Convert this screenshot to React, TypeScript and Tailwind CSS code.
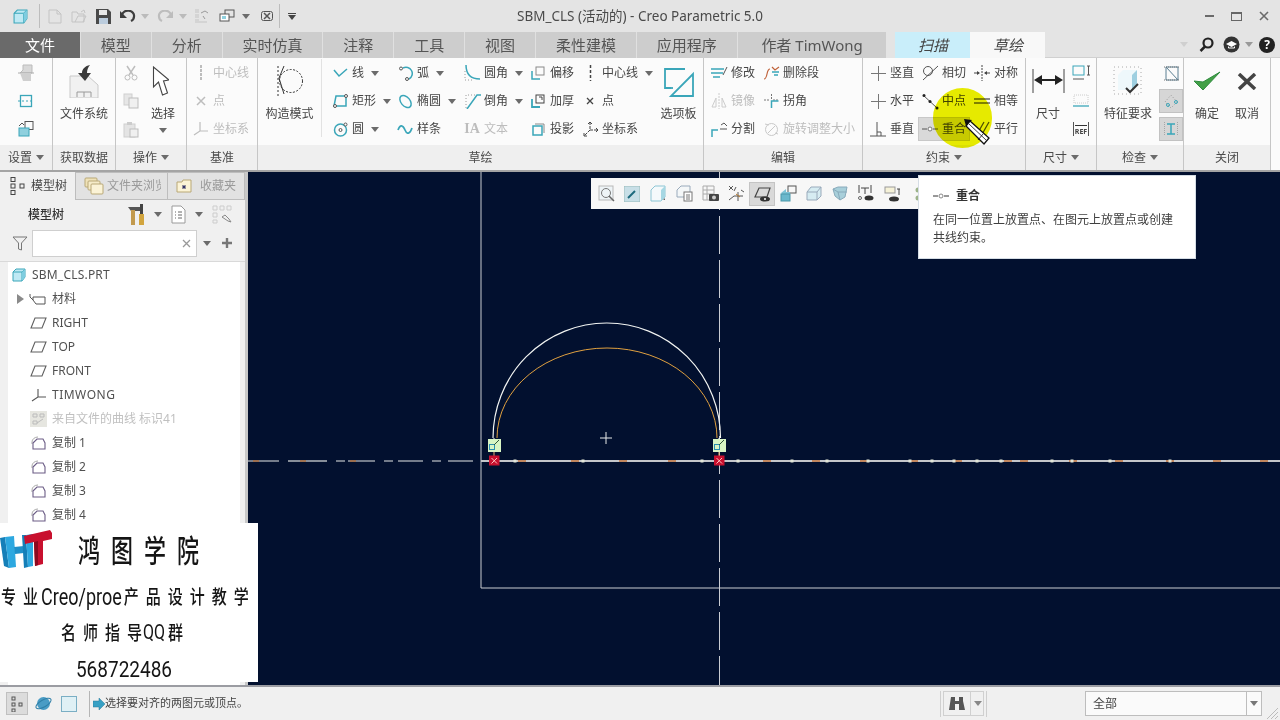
import React from 'react';

type K = { children?: React.ReactNode; w?: number; h?: number };
const S = ({ children, w = 16, h = 16 }: K) => (
  <svg width={w} height={h} viewBox={`0 0 ${w} ${h}`} fill="none" className="shrink-0 block">{children}</svg>
);
const T = '#3aa6b9';
const D = '#c4c4c4';

const Caret = ({ c = '#6b6b6b' }: { c?: string }) => (
  <svg width="8" height="5" viewBox="0 0 8 5" className="shrink-0 block"><path d="M0 0h8L4 5z" fill={c} /></svg>
);

const Cube = ({ s = 14 }: { s?: number }) => (
  <svg width={s} height={s} viewBox="0 0 14 14" className="shrink-0 block">
    <path d="M1 4l3-3h9v8l-3 4H1z" fill="#bfe9f4" stroke="#3aa6b9" />
    <path d="M1 4h9v9M10 4l3-3" stroke="#3aa6b9" fill="none" />
    <path d="M10 4l3-3v8l-3 4z" fill="#7fcde0" />
  </svg>
);

const Item = ({ icon, label, arrow, dis }: { icon: React.ReactNode; label: string; arrow?: boolean; dis?: boolean }) => (
  <div className={`flex items-center h-[28px] text-[12px] whitespace-nowrap ${dis ? 'text-[#bdbdbd]' : 'text-[#454545]'}`}>
    <span className="w-[18px] flex justify-center shrink-0">{icon}</span>
    <span className="ml-[3px]">{label}</span>
    {arrow && <span className="ml-[7px]"><Caret /></span>}
  </div>
);

const Cell = ({ children, on }: { children: React.ReactNode; on?: boolean }) => (
  <div className="h-[28px] flex items-center justify-center">
    <div className={`w-[24px] h-[24px] flex items-center justify-center ${on ? 'bg-[#d6d6d6] border border-[#c2c2c2]' : ''}`}>{children}</div>
  </div>
);

const Group = ({ label, arrow, className, children }: { label: string; arrow?: boolean; className: string; children: React.ReactNode }) => (
  <div className={`flex flex-col h-full border-r border-[#c6c6c6] shrink-0 ${className}`}>
    <div className="h-[87px] pt-[1px] flex">{children}</div>
    <div className="h-[25px] bg-[#efefef] flex items-center justify-center gap-[4px] text-[12px] text-[#4a4a4a]">
      {label}{arrow && <Caret />}
    </div>
  </div>
);

const Big = ({ icon, label, className, arrow }: { icon: React.ReactNode; label: string; className: string; arrow?: boolean }) => (
  <div className={`flex flex-col items-center text-[12px] text-[#454545] whitespace-nowrap ${className}`}>
    <div className="h-[44px] flex items-center justify-center">{icon}</div>
    <div className="h-[22px] flex items-center">{label}</div>
    {arrow && <div className="mt-[3px]"><Caret /></div>}
  </div>
);

const tabs: [string, string][] = [
  ['模型', 'w-[71px]'], ['分析', 'w-[71px]'], ['实时仿真', 'w-[101px]'], ['注释', 'w-[71px]'], ['工具', 'w-[71px]'],
  ['视图', 'w-[71px]'], ['柔性建模', 'w-[101px]'], ['应用程序', 'w-[101px]'], ['作者 TimWong', 'w-[150px]'],
];

const Plane = () => (
  <S w={17} h={14}><path d="M5 2h11l-4 10H1z" stroke="#5f5f5f" strokeWidth="1.1" /></S>
);
const Copy = () => (
  <S w={17} h={16}>
    <path d="M8 2a6 5 0 0 0-6 5v2" stroke="#a9a9a9" />
    <path d="M3 8l4-4h6l2 4v6H3z" stroke="#6c5d86" strokeWidth="1.1" />
  </S>
);

const Tree = ({ icon, label, dis, wide }: { icon: React.ReactNode; label: string; dis?: boolean; wide?: boolean }) => (
  <div className={`h-[24px] flex items-center pl-[21px] text-[12px] ${dis ? 'text-[#c0c0c0]' : 'text-[#505050]'}`}>
    <span className="w-[19px] flex justify-center shrink-0">{icon}</span>
    <span className={`ml-[4px] whitespace-nowrap ${wide ? 'tracking-[0.5px]' : ''}`}>{label}</span>
  </div>
);

const TbIcon = ({ children, on }: { children: React.ReactNode; on?: boolean }) => (
  <div className={`w-[26px] h-[24px] flex items-center justify-center shrink-0 ${on ? 'bg-[#d9d9d9] border border-[#c4c4c4]' : ''}`}>{children}</div>
);

const dotsX = [515, 583, 702, 738, 792, 827, 868, 910, 932, 954, 977, 1001, 1052, 1072, 1110, 1170];
const orangeX = [518, 571, 619, 668, 763, 812, 860, 910, 954, 1004, 1020, 1069, 1115, 1166, 1213, 1260];
const dashes = [[248, 279], [288, 327], [336, 345], [348, 375], [384, 393], [398, 423], [432, 441], [448, 473]];

const Marker = ({ x }: { x: number }) => (
  <g>
    <path d={`M${x} 438v8`} stroke="#fff" />
    <rect x={x - 6} y={439} width={13} height={13} fill="#d8f5c4" />
    <rect x={x - 4.5} y={444.5} width={5} height={5} fill="none" stroke="#2c8fb0" />
    <path d={`M${x} 445l5-5`} stroke="#30553a" />
    <path d={`M${x} 452v5`} stroke="#e8b070" />
    <rect x={x - 5} y={455.5} width={10.5} height={10} fill="#c8102e" />
    <path d={`M${x - 2.5} 458l5.500 5.500M${x + 3} 458l-5.500 5.500`} stroke="#ffc0c0" />
  </g>
);

export default function App() {
  return (
    <div className="relative w-[1280px] h-[720px] overflow-hidden flex flex-col bg-[#f0f0f0] font-['Noto_Sans','Noto_Sans_CJK_SC',sans-serif] text-[#454545]">
      {/* Title bar */}
      <div className="h-[32px] shrink-0 bg-[#e4e4e4] grid grid-cols-[1fr_auto_1fr] items-center">
        <div className="flex items-center">
          <span className="ml-[13px]"><Cube s={15} /></span>
          <span className="ml-[11px] w-px h-[24px] bg-[#bdbdbd]" />
          <span className="ml-[8px]"><S w={14} h={15}><path d="M1 1h8l4 4v9H1z" stroke={D} /><path d="M9 1v4h4" stroke={D} /></S></span>
          <span className="ml-[9px]"><S w={16} h={14}><path d="M1 3h5l1 2h6v8H1z" stroke={D} /><path d="M4 13l3-6h8l-3 6" stroke={D} /><path d="M10 3l3-2 1 3" stroke={D} /></S></span>
          <span className="ml-[9px]"><S w={15} h={15}><path d="M0 0h12l3 3v12H0z" fill="#4a4a4a" /><rect x="3" y="1" width="8" height="5" fill="#e8e8e8" /><rect x="3" y="9" width="9" height="6" fill="#bcd" /></S></span>
          <span className="ml-[9px]"><S w={16} h={12}><path d="M2 5a6 5 0 0 1 12 1.500c0 2-1 3.500-3 4.500" stroke="#3d3d3d" strokeWidth="2.200" /><path d="M0 1v7h7z" fill="#3d3d3d" /></S></span>
          <span className="ml-[5px]"><Caret c="#bbb" /></span>
          <span className="ml-[8px]"><S w={16} h={12}><path d="M14 5a6 5 0 0 0-12 1.500c0 2 1 3.500 3 4.500" stroke="#bdbdbd" strokeWidth="2.200" /><path d="M16 1v7H9z" fill="#bdbdbd" /></S></span>
          <span className="ml-[6px]"><Caret c="#bbb" /></span>
          <span className="ml-[7px]"><S w={15} h={16}><path d="M1 2h4M1 7h4M1 12h4M1 4h4M1 9h4M1 14h12" stroke={D} /><path d="M7 5l4-2 3 2M9 8l2 3" stroke="#9a9a9a" /></S></span>
          <span className="ml-[10px]"><S w={16} h={14}><rect x="6" y="1" width="9" height="7" stroke="#555" /><rect x="1" y="5" width="9" height="7" fill="#fff" stroke="#555" /><rect x="3" y="7" width="4" height="3" fill="#8fd0de" /></S></span>
          <span className="ml-[7px]"><Caret /></span>
          <span className="ml-[11px]"><S w={12} h={10}><rect x="0.500" y="0.500" width="11" height="9" rx="2" stroke="#555" /><path d="M3 2l6 6M9 2L3 8" stroke="#555" strokeWidth="1.500" /></S></span>
          <span className="ml-[6px] w-px h-[24px] bg-[#bdbdbd]" />
          <span className="ml-[8px] flex flex-col gap-[1px] items-center"><span className="w-[8px] h-px bg-[#444]" /><Caret c="#444" /></span>
        </div>
        <div className="text-[13.5px] text-[#4a4a4a] whitespace-nowrap">SBM_CLS (活动的) - Creo Parametric 5.0</div>
        <div className="flex items-center justify-end pr-[11px] gap-[17px]">
          <span className="w-[9px] h-[2px] bg-[#6a6a6a]" />
          <span className="w-[11px] h-[9px] border border-[#666] border-t-2" />
          <S w={10} h={10}><path d="M1 1l8 8M9 1L1 9" stroke="#6a6a6a" strokeWidth="1.600" /></S>
        </div>
      </div>

      {/* Tabs */}
      <div className="h-[26px] shrink-0 bg-[#cdcdcd] flex text-[15px] text-[#555]">
        <div className="w-[80px] bg-[#6a6a6a] text-white flex items-center justify-center">文件</div>
        {tabs.map(([t, w]) => (
          <div key={t} className={`${w} flex items-center justify-center border-l border-[#e0e0e0] whitespace-nowrap`}>{t}</div>
        ))}
        <div className="w-[9px] bg-[#e4e4e4]" />
        <div className="flex h-full">
          <div className="w-[75px] bg-[#c9eefa] italic flex items-center justify-center text-[#444]">扫描</div>
          <div className="w-[75px] bg-[#f8f8f8] italic flex items-center justify-center text-[#444]">草绘</div>
        </div>
        <div className="w-[235px] bg-[#e4e4e4] flex items-center justify-end pr-[5px] border-b border-[#d0d0d0]">
          <Caret c="#cfcfcf" />
          <span className="ml-[11px]"><S w={15} h={15}><circle cx="9" cy="6" r="4.500" stroke="#222" strokeWidth="2.200" /><path d="M6 9.500L1.500 14" stroke="#222" strokeWidth="2.500" /></S></span>
          <span className="ml-[9px]"><S w={17} h={17}><circle cx="8.500" cy="8.500" r="8" fill="#333" /><path d="M3 8l5.500-3L14 8l-5.500 3z" fill="#fff" /><path d="M5.500 10.500v1.500h6v-1.500" stroke="#fff" /></S></span>
          <span className="ml-[5px]"><Caret c="#999" /></span>
          <span className="ml-[6px] w-[16px] h-[16px] rounded-full bg-[#222] text-white text-[12px] font-bold flex items-center justify-center">?</span>
        </div>
      </div>

      {/* Ribbon */}
      <div className="h-[114px] shrink-0 flex bg-[#fbfbfb] border-b-2 border-[#a4a4a4]">
        <Group label="设置" arrow className="w-[53px]">
          <div className="w-full flex flex-col items-center">
            <div className="h-[28px] flex items-center"><S w={18} h={18}><path d="M6 1h9v8H3l3-3z" fill="#d8d8d8" stroke="#bbb" /><path d="M1 9h16" stroke="#aaa" /><path d="M3 9l3 8h8V9" fill="#cfcfcf" /></S></div>
            <div className="h-[28px] flex items-center"><S w={16} h={14}><rect x="2.500" y="1.500" width="11" height="11" stroke={T} strokeWidth="1.300" /><path d="M0 7h16" stroke={T} strokeDasharray="2 2" /></S></div>
            <div className="h-[28px] flex items-center"><S w={18} h={18}><rect x="8" y="1.500" width="8" height="8" stroke="#555" /><rect x="2" y="8" width="10" height="8" fill="#8fd0de" stroke={T} /><path d="M2 6l3-3 2 2" stroke="#555" /></S></div>
          </div>
        </Group>
        <Group label="获取数据" className="w-[63px]">
          <Big className="w-full" label="文件系统" icon={
            <S w={30} h={33}>
              <path d="M1 11h18l10 9v13H1z" fill="#f1f1f1" stroke="#c9c9c9" />
              <path d="M8 32v-5h7v5M15 27h7v5" stroke="#9a9a9a" />
              <path d="M21 0c-5 1-8 4-8 8H9l7 8 6-8h-4c0-3 1-6 3-8z" fill="#3a3a3a" />
            </S>} />
        </Group>
        <Group label="操作" arrow className="w-[71px]">
          <div className="w-[28px] flex flex-col items-center ml-[1px]">
            <div className="h-[28px] flex items-center"><S w={14} h={16}><path d="M3 1l6 9M11 1L5 10" stroke="#bdbdbd" strokeWidth="1.500" /><circle cx="3.500" cy="12.500" r="2.500" stroke="#bdbdbd" /><circle cx="10.500" cy="12.500" r="2.500" stroke="#bdbdbd" /></S></div>
            <div className="h-[28px] flex items-center"><S w={16} h={16}><rect x="1" y="1" width="8" height="11" fill="#e6e6e6" stroke="#cfcfcf" /><rect x="6" y="5" width="9" height="10" fill="#f0f0f0" stroke="#bdbdbd" /></S></div>
            <div className="h-[28px] flex items-center"><S w={16} h={17}><rect x="1" y="3" width="11" height="13" fill="#e4e4e4" stroke="#cfcfcf" /><rect x="4" y="1" width="5" height="3" fill="#ccc" /><rect x="7" y="8" width="8" height="8" fill="#f0f0f0" stroke="#bdbdbd" /></S></div>
          </div>
          <Big className="w-[36px]" label="选择" arrow icon={
            <span className="mr-[6px]"><S w={17} h={31}><path d="M1.500 1v20l5-5 4 13 5-2-4-12 5.500-1z" fill="#fff" stroke="#444" strokeWidth="1.100" /></S></span>} />
        </Group>
        <Group label="基准" className="w-[71px]">
          <div className="pl-[5px]">
            <Item dis label="中心线" icon={<S w={4} h={16}><path d="M2 0v16" stroke="#bdbdbd" strokeWidth="2" strokeDasharray="3 1" /></S>} />
            <Item dis label="点" icon={<S w={10} h={10}><path d="M1 1l8 8M9 1L1 9" stroke="#bdbdbd" strokeWidth="1.500" /></S>} />
            <Item dis label="坐标系" icon={<S w={16} h={16}><path d="M7 1v9l-6 4M7 10h8" stroke="#bdbdbd" strokeWidth="1.200" /></S>} />
          </div>
        </Group>
        <Group label="草绘" className="w-[446px]">
          <Big className="w-[64px] border-r border-[#e2e2e2] h-[78px]" label="构造模式" icon={
            <S w={28} h={30}>
              <path d="M2 0v30" stroke="#333" strokeDasharray="2 2" />
              <path d="M8 0L3 12l5 16" stroke="#333" />
              <circle cx="15" cy="15" r="11.500" stroke="#333" strokeDasharray="2 1.500" />
            </S>} />
          <div className="w-[65px] ml-[9px]">
            <Item arrow label="线" icon={<S w={15} h={10}><path d="M1 2l5 6 8-7" stroke={T} strokeWidth="1.500" /></S>} />
            <Item arrow label="矩形" icon={<S w={15} h={14}><path d="M3 2h10v10H1z" stroke={T} strokeWidth="1.500" /><circle cx="13" cy="2" r="1.500" fill="#fff" stroke="#555" /><circle cx="2" cy="12" r="1.500" fill="#fff" stroke="#555" /></S>} />
            <Item arrow label="圆" icon={<S w={15} h={15}><circle cx="7.500" cy="8" r="6" stroke={T} strokeWidth="1.500" /><circle cx="7.500" cy="8" r="1.500" stroke="#555" /><circle cx="12.500" cy="2.500" r="1.500" fill="#fff" stroke="#555" /></S>} />
          </div>
          <div className="w-[67px]">
            <Item arrow label="弧" icon={<S w={15} h={15}><path d="M5 2a6 6 0 0 1 6 11" stroke={T} strokeWidth="1.500" /><circle cx="3" cy="2.500" r="1.500" stroke="#555" /><circle cx="9" cy="13" r="1.500" stroke="#555" /></S>} />
            <Item arrow label="椭圆" icon={<S w={15} h={15}><ellipse cx="7.500" cy="7.500" rx="4.500" ry="7" transform="rotate(-40 7.500 7.500)" stroke={T} strokeWidth="1.500" /></S>} />
            <Item label="样条" icon={<S w={16} h={10}><path d="M1 6c2-6 5-5 7 0s5 4 7-2" stroke={T} strokeWidth="1.700" /></S>} />
          </div>
          <div className="w-[66px]">
            <Item arrow label="圆角" icon={<S w={17} h={16}><path d="M2 0c0 9 5 14 14 14" stroke={T} strokeWidth="1.500" /><path d="M1 6v9h9" stroke="#9a9a9a" strokeDasharray="1 2" /></S>} />
            <Item arrow label="倒角" icon={<S w={17} h={16}><path d="M3 16L13 2h4" stroke={T} strokeWidth="1.500" /><path d="M2 15V2h10" stroke="#9a9a9a" strokeDasharray="1 2" /></S>} />
            <Item dis label="文本" icon={<span className="font-['Liberation_Serif',serif] font-bold text-[14px] text-[#bdbdbd] leading-none">IA</span>} />
          </div>
          <div className="w-[52px]">
            <Item label="偏移" icon={<S w={14} h={14}><path d="M1 5v8h8" stroke={T} strokeWidth="1.500" /><rect x="5" y="1" width="8" height="8" stroke="#8a8a8a" /></S>} />
            <Item label="加厚" icon={<S w={14} h={14}><path d="M1 5v8h8" stroke={T} strokeWidth="1.800" /><rect x="5" y="1" width="8" height="8" stroke="#444" /><path d="M8 3h3v3" stroke="#444" /></S>} />
            <Item label="投影" icon={<S w={13} h={13}><rect x="1" y="3" width="9" height="9" stroke={T} strokeWidth="1.500" /><path d="M3 1h9v9" stroke="#8a8a8a" /></S>} />
          </div>
          <div className="w-[74px]">
            <Item arrow label="中心线" icon={<S w={3} h={16}><path d="M1.500 0v16" stroke="#444" strokeWidth="1.500" strokeDasharray="3 2" /></S>} />
            <Item label="点" icon={<S w={8} h={8}><path d="M1 1l6 6M7 1L1 7" stroke="#444" strokeWidth="1.300" /></S>} />
            <Item label="坐标系" icon={<S w={15} h={16}><path d="M7 1v8l-6 6M7 9h7" stroke="#444" strokeDasharray="3 1" /><path d="M5 3l2-2 2 2M13 7l2 2-2 2M1 12v3h3" stroke="#444" /></S>} />
          </div>
          <Big className="w-[47px]" label="选项板" icon={
            <S w={31} h={31}>
              <path d="M22 3H2v19h6" stroke={T} strokeWidth="1.800" />
              <path d="M8 30h22V8z" stroke={T} strokeWidth="1.800" />
              <path d="M2 22h8" stroke={T} strokeWidth="1.800" />
            </S>} />
        </Group>
        <Group label="编辑" className="w-[159px]">
          <div className="w-[58px] pl-[6px]">
            <Item label="修改" icon={<S w={17} h={14}><path d="M0 3h13M0 7h12M2 11h7" stroke={T} strokeWidth="1.300" /><path d="M16 1l-4 8" stroke="#555" /></S>} />
            <Item dis label="镜像" icon={<S w={16} h={16}><path d="M8 0v16" stroke="#ccc" strokeDasharray="2 1" /><path d="M1 14l4-9v9zM15 14l-4-9v9z" stroke="#ccc" /></S>} />
            <Item label="分割" icon={<S w={17} h={15}><path d="M1 15V8h6" stroke={T} strokeWidth="1.500" /><path d="M9 7h7M10 3l3-2 3 3" stroke="#555" /></S>} />
          </div>
          <div>
            <Item label="删除段" icon={<S w={17} h={16}><path d="M1 14c4 0 2-10 6-10M16 2l-4 3-3-3" stroke="#c0623a" strokeWidth="1.200" /><path d="M9 7h7M11 10h4" stroke={T} strokeWidth="1.300" /></S>} />
            <Item label="拐角" icon={<S w={15} h={14}><path d="M0 6h6M9 6h6" stroke="#777" strokeDasharray="2 1" /><path d="M7.500 0v5" stroke="#777" strokeDasharray="2 1" /><path d="M7.500 14V7h7" stroke={T} strokeWidth="1.500" /></S>} />
            <Item dis label="旋转调整大小" icon={<S w={15} h={15}><circle cx="7.500" cy="7.500" r="6" stroke="#c9c9c9" /><path d="M4 11l7-7M1 2l4 1M11 11l3 1" stroke="#c9c9c9" /></S>} />
          </div>
        </Group>
        <Group label="约束" arrow className="w-[163px]">
          <div className="w-[58px] pl-[6px]">
            <Item label="竖直" icon={<S w={15} h={15}><path d="M7.500 0v15M0 7.500h15" stroke="#777" /></S>} />
            <Item label="水平" icon={<S w={15} h={15}><path d="M7.500 0v15M0 7.500h15" stroke="#777" /></S>} />
            <Item label="垂直" icon={<S w={16} h={15}><path d="M0 14h16M7 0v14M7 10h4v4" stroke="#555" /></S>} />
          </div>
          <div className="w-[52px]">
            <Item label="相切" icon={<S w={17} h={16}><circle cx="6" cy="6" r="4.500" stroke="#555" /><path d="M1 15L16 1" stroke="#555" /></S>} />
            <Item label="中点" icon={<S w={17} h={17}><path d="M1 2l14 13" stroke="#555" /><circle cx="2" cy="2.500" r="1.500" fill="#222" /><circle cx="8" cy="8.500" r="1.500" fill="#222" /><circle cx="15" cy="15" r="1.500" fill="#222" /></S>} />
            <div className="h-[28px] flex items-center text-[12px] text-[#454545] -ml-[3px]">
              <div className="w-[52px] h-[24px] bg-[#d9d9d9] border border-[#c8c8c8] flex items-center whitespace-nowrap pl-[3px]">
                <S w={16} h={6}><path d="M0 3h5M11 3h5" stroke="#555" /><circle cx="8" cy="3" r="2" fill="#fff" stroke="#777" /></S>
                <span className="ml-[4px]">重合</span>
              </div>
            </div>
          </div>
          <div>
            <Item label="对称" icon={<S w={16} h={16}><path d="M8 0v16" stroke="#444" strokeDasharray="2 1" /><path d="M0 8h5M11 8h5" stroke="#444" /><path d="M3 6l3 2-3 2zM13 6l-3 2 3 2z" fill="#444" /></S>} />
            <Item label="相等" icon={<S w={16} h={6}><path d="M0 1h16M0 5h16" stroke="#666" strokeWidth="1.300" /></S>} />
            <Item label="平行" icon={<S w={16} h={16}><path d="M2 15L10 1M7 15L15 1" stroke="#555" strokeWidth="1.300" /></S>} />
          </div>
        </Group>
        <Group label="尺寸" arrow className="w-[71px]">
          <Big className="w-[44px]" label="尺寸" icon={
            <S w={33} h={24}><path d="M1 0v24M32 0v24" stroke="#444" /><path d="M4 11h25" stroke="#222" strokeWidth="2" /><path d="M2 11l8-5v10zM31 11l-8-5v10z" fill="#222" /></S>} />
          <div className="w-[22px]">
            <div className="h-[28px] flex items-center justify-center"><S w={18} h={16}><rect x="1" y="1" width="11" height="9" stroke={T} /><path d="M15 1h3M15 10h3M16.500 1v9M1 14h11" stroke="#555" /></S></div>
            <div className="h-[28px] flex items-center justify-center"><S w={16} h={14}><rect x="1" y="1" width="14" height="8" stroke="#ccc" strokeDasharray="1 1" /><path d="M0 12h16" stroke={T} strokeWidth="1.300" /></S></div>
            <div className="h-[28px] flex items-center justify-center"><div className="w-[16px] text-[7px] leading-[8px] text-[#444] border-x border-[#555] font-bold text-center"><div className="h-[6px] flex items-center justify-center"><S w={12} h={5}><path d="M0 2.500h12" stroke="#333" /></S></div>REF</div></div>
          </div>
        </Group>
        <Group label="检查" arrow className="w-[87px]">
          <Big className="w-[63px]" label="特征要求" icon={
            <S w={30} h={30}>
              <rect x="1" y="1" width="27" height="27" stroke="#aaa" strokeDasharray="1 3" />
              <path d="M5 9l5-5h14v14l-5 6H5z" fill="#eef8fb" />
              <path d="M19 9l5-5v14l-5 6z" fill="#9ecfe0" />
              <path d="M13 22l4 4 8-8" stroke="#333" strokeWidth="2" />
            </S>} />
          <div className="w-[24px]">
            <Cell><S w={15} h={15}><path d="M2 1l12 13H2zM2 1h12v13" stroke="#5a7f92" /><path d="M0 1h15M0 14h15" stroke="#777" strokeDasharray="1 1" /></S></Cell>
            <Cell on><S w={18} h={16}><path d="M3 9l6-7 6 7-6 6z" stroke="#999" strokeDasharray="1 2" /><circle cx="6" cy="12" r="1.500" stroke={T} /><circle cx="14" cy="9" r="1.500" stroke={T} /></S></Cell>
            <Cell on><S w={14} h={14}><path d="M3 2h8M3 12h8M7 2v10" stroke={T} strokeWidth="1.500" /><path d="M0 0v14M14 0v14" stroke="#777" strokeDasharray="1 1" /></S></Cell>
          </div>
        </Group>
        <Group label="关闭" className="w-[87px]">
          <Big className="w-[46px]" label="确定" icon={
            <S w={28} h={20}><path d="M1 10l9 9L27 1 10 11z" fill="#43a047" stroke="#2e8b3e" /></S>} />
          <Big className="w-[34px]" label="取消" icon={
            <S w={20} h={17}><path d="M2 1l16 15M18 1L2 16" stroke="#444" strokeWidth="3.500" /></S>} />
        </Group>
      </div>

      {/* Main */}
      <div className="flex-1 min-h-0 flex">
        {/* Left panel */}
        <div className="w-[248px] shrink-0 flex flex-col bg-[#f0f0f0] border-r-[3px] border-[#c8c8c8]">
          <div className="h-[28px] shrink-0 flex text-[12px]">
            <div className="w-[75px] flex items-center pl-[10px] text-[#454545]">
              <S w={15} h={18}><rect x="1" y="0.500" width="4" height="4" stroke="#444" /><rect x="1" y="7" width="4" height="4" stroke="#444" /><rect x="1" y="13.500" width="4" height="4" stroke="#444" /><rect x="10" y="7" width="4" height="4" stroke="#444" /></S>
              <span className="ml-[6px]">模型树</span>
            </div>
            <div className="w-[93px] flex items-center pl-[8px] bg-[#e2e2e2] border border-[#bdbdbd] text-[#9a9a9a]">
              <S w={20} h={18}><rect x="1" y="1" width="12" height="9" rx="1" fill="#efe2b8" stroke="#b9a877" /><rect x="4" y="4" width="12" height="9" rx="1" fill="#f5ebc8" stroke="#b9a877" /><rect x="7" y="7" width="12" height="10" rx="1" fill="#fbf3d6" stroke="#b9a877" /></S>
              <span className="ml-[3px] w-[54px] overflow-hidden whitespace-nowrap">文件夹浏览</span>
            </div>
            <div className="w-[77px] flex items-center pl-[8px] bg-[#e2e2e2] border border-l-0 border-[#bdbdbd] text-[#9a9a9a]">
              <S w={17} h={14}><path d="M1 3h5l1-2h8v12H1z" fill="#fbf3d6" stroke="#b9a877" /><path d="M6 8h4M8 6v4M6.500 6.500l3 3M9.500 6.500l-3 3" stroke="#336" /></S>
              <span className="ml-[7px]">收藏夹</span>
            </div>
          </div>
          <div className="h-[29px] shrink-0 flex items-center pl-[28px] text-[12px] text-[#333]">
            <span className="font-medium">模型树</span>
            <span className="ml-[64px]"><S w={17} h={21}><path d="M0 3h12v4H3z" fill="#555" /><rect x="3" y="6" width="4" height="15" fill="#c29a4e" /><rect x="12" y="0" width="3" height="10" fill="#444" /><rect x="11" y="10" width="5" height="11" fill="#d2a53f" /></S></span>
            <span className="ml-[9px]"><Caret /></span>
            <span className="ml-[9px]"><S w={15} h={19}><path d="M1 1h9l4 4v13H1z" fill="#fff" stroke="#9a9a9a" /><path d="M4 7h1M4 10h1M4 13h1M7 7h4M7 10h4M7 13h4" stroke="#666" /></S></span>
            <span className="ml-[9px]"><Caret /></span>
            <span className="ml-[9px]"><S w={20} h={19}><path d="M1 1h4v4H1zM1 8h4v4H1zM1 15h4v3H1zM8 1h4v4H8zM15 1h4v4h-4z" stroke="#ccc" /><path d="M10 12l3-2 4 4 2 3-3-1z" stroke="#888" /></S></span>
          </div>
          <div className="h-[33px] pb-[4px] shrink-0 flex items-center border-b border-[#d9d9d9]">
            <span className="ml-[12px]"><S w={16} h={15}><path d="M1 1h14L9.500 7v7l-3-1V7z" stroke="#777" /></S></span>
            <div className="ml-[4px] w-[165px] h-[27px] bg-white border border-[#cfcfcf] flex items-center justify-end pr-[5px]">
              <S w={9} h={9}><path d="M1 1l7 7M8 1L1 8" stroke="#999" strokeWidth="1.300" /></S>
            </div>
            <span className="ml-[6px]"><Caret /></span>
            <span className="ml-[10px]"><S w={12} h={12}><path d="M6 1v10M1 6h10" stroke="#777" strokeWidth="2.400" /></S></span>
          </div>
          <div className="flex-1 min-h-0 bg-white ml-[8px] mr-[5px] pt-[1px] overflow-hidden">
            <div className="h-[24px] flex items-center pl-[4px] text-[12px] text-[#505050]">
              <Cube s={14} />
              <span className="ml-[6px] tracking-[0.2px]">SBM_CLS.PRT</span>
            </div>
            <div className="h-[24px] flex items-center pl-[9px] text-[12px] text-[#505050]">
              <svg width="7" height="10" viewBox="0 0 7 10" className="shrink-0"><path d="M0 0l7 5-7 5z" fill="#8a8a8a" /></svg>
              <span className="ml-[5px]"><S w={17} h={12}><path d="M1 1v3l3 3M4 4h12v7H7L4 7z" stroke="#555" /></S></span>
              <span className="ml-[6px]">材料</span>
            </div>
            <Tree label="RIGHT" icon={<Plane />} />
            <Tree label="TOP" icon={<Plane />} />
            <Tree label="FRONT" icon={<Plane />} />
            <Tree wide label="TIMWONG" icon={<S w={16} h={14}><path d="M7 1v8l-6 4M7 9h8" stroke="#555" strokeWidth="1.100" /></S>} />
            <Tree dis label="来自文件的曲线 标识41" icon={<S w={17} h={16}><rect width="17" height="16" fill="#e6e6e0" /><path d="M3 3h4v3H3zM10 3h4v3h-4zM3 10h4v3H3zM7 12l6-4" stroke="#bbb" /></S>} />
            <Tree label="复制 1" icon={<Copy />} />
            <Tree label="复制 2" icon={<Copy />} />
            <Tree label="复制 3" icon={<Copy />} />
            <Tree label="复制 4" icon={<Copy />} />
          </div>
        </div>

        {/* Canvas */}
        <div className="flex-1 min-w-0 bg-[#02102f]">
          <svg viewBox="248 172 1032 513" className="block w-full h-full">
            <path d="M481 172V588H1280" stroke="#c9ccd2" fill="none" />
            <path d="M719.5 172v513" stroke="#c9ccd2" strokeDasharray="38 6" />
            {dashes.map(([a, b]) => <path key={a} d={`M${a} 461H${b}`} stroke="#b4b8be" strokeWidth="1.300" />)}
            <path d="M481 461H1280" stroke="#c4c6ca" strokeWidth="1.800" />
            {orangeX.map((x) => <path key={x} d={`M${x} 461h8`} stroke="#c0703a" strokeWidth="1.500" />)}
            {[253, 300, 350].map((x) => <path key={x} d={`M${x} 461h6`} stroke="#a8683a" strokeWidth="1.500" />)}
            {dotsX.map((x) => <rect key={x} x={x - 1.500} y={459.500} width="3" height="3" fill="#e2e6d8" />)}
            <path d="M493 438a113.750 115 0 0 1 227.500 0" stroke="#f2f4f2" fill="none" strokeWidth="1.200" />
            <path d="M497 438a110 90 0 0 1 220 0" stroke="#e0a040" fill="none" />
            <path d="M606 432v12M600 438h12" stroke="#e8eaea" />
            <Marker x={494} />
            <Marker x={719} />
          </svg>
        </div>
      </div>

      {/* Status bar */}
      <div className="h-[35px] shrink-0 bg-[#f0f0f0] border-t-2 border-[#9b9ca2] flex items-center text-[11px] text-[#444]">
        <div className="ml-[6px] w-[22px] h-[23px] bg-[#dcdcdc] border border-[#c0c0c0] flex items-center justify-center">
          <S w={12} h={16}><rect x="1" y="1" width="3" height="3" stroke="#555" /><rect x="1" y="7" width="3" height="3" stroke="#555" /><rect x="1" y="13" width="3" height="3" stroke="#555" /><rect x="8" y="7" width="3" height="3" stroke="#555" /></S>
        </div>
        <span className="ml-[7px]"><S w={17} h={17}><circle cx="8.500" cy="8.500" r="6.500" fill="#4a9cc5" /><ellipse cx="8.500" cy="8.500" rx="8.500" ry="3.500" transform="rotate(-30 8.500 8.500)" stroke="#2f7fa8" /></S></span>
        <span className="ml-[9px] w-[16px] h-[16px] border border-[#7aaec4] bg-[#dff0f5]" />
        <span className="ml-[12px] w-px h-[26px] bg-[#b5b5b5]" />
        <span className="ml-[3px]"><S w={12} h={12}><path d="M0 3h6V0l6 6-6 6V9H0z" fill="#37a0c4" stroke="#2a7b9a" strokeWidth="0.500" /></S></span>
        <span className="whitespace-nowrap">选择要对齐的两图元或顶点。</span>
        <div className="flex-1" />
        <span className="h-[26px] w-px bg-[#cfcfcf]" />
        <div className="ml-[2px] w-[41px] h-[25px] border border-[#d0d0d0] flex items-center">
          <span className="ml-[5px]"><S w={16} h={15}><path d="M2 1h4v4h4V1h4v4l2 9h-6V8H6v6H0z" fill="#555" /></S></span>
          <span className="ml-[5px] border-l border-[#d0d0d0] pl-[3px] h-full flex items-center"><Caret c="#888" /></span>
        </div>
        <span className="ml-[2px] h-[26px] w-px bg-[#cfcfcf]" />
        <div className="ml-[98px] w-[177px] h-[25px] bg-[#fafafa] border border-[#bdbdbd] flex items-center text-[12px]">
          <span className="ml-[7px] flex-1">全部</span>
          <span className="w-[15px] h-full border-l border-[#bdbdbd] flex items-center justify-center"><Caret c="#777" /></span>
        </div>
        <span className="ml-[4px] mr-[2px] self-end mb-[1px]"><S w={12} h={12}><path d="M1 12L12 1M5 12l7-7M9 12l3-3" stroke="#bbb" /></S></span>
      </div>

      {/* Graphics toolbar */}
      <div className="absolute left-[591px] top-[178px] w-[330px] h-[31px] bg-[#f7f7f7] flex items-center pl-[2px]">
        <TbIcon><S w={17} h={17}><rect x="1" y="1" width="14" height="14" fill="#eef4f7" stroke="#b9b9b9" /><circle cx="8" cy="8" r="4.500" stroke="#777" /><path d="M11 11l5 5" stroke="#666" strokeWidth="1.500" /></S></TbIcon>
        <TbIcon><S w={16} h={16}><rect width="16" height="16" fill="#c8dfe7" stroke="#9bb" /><path d="M4 12l7-7" stroke="#1c6a7c" strokeWidth="2" /></S></TbIcon>
        <TbIcon><S w={17} h={17}><path d="M1 5l4-4h10v11l-4 4H1z" fill="#f4f9fb" stroke="#8cc5d4" /><path d="M11 5l4-4v11l-4 4z" fill="#a6d7e3" /><path d="M13 15l2-2v2z" fill="#666" /></S></TbIcon>
        <TbIcon><S w={17} h={17}><path d="M1 5l4-4h9v11H1z" fill="#f4f7f8" stroke="#9ab" /><rect x="8" y="7" width="8" height="9" fill="#fff" stroke="#777" /><path d="M10 10h4M10 12h4M10 14h4" stroke="#777" /></S></TbIcon>
        <TbIcon><S w={17} h={17}><path d="M1 1h11v14H1zM1 5h11M1 9h11M5 1v14" stroke="#aaa" /><rect x="7" y="9" width="10" height="7" rx="1" fill="#444" /><circle cx="12" cy="12.500" r="2" fill="#ccc" /></S></TbIcon>
        <TbIcon><S w={17} h={17}><path d="M1 1l4 4M5 1L1 5M8 2l-2 4M10 16V7M6 11h9M1 15l5-4M13 5l3 2" stroke="#555" /><path d="M8 9l4 3" stroke="#c08030" /></S></TbIcon>
        <TbIcon on><S w={18} h={16}><path d="M6 2h11l-3 9H2z" stroke="#444" strokeWidth="1.200" /><ellipse cx="12" cy="13" rx="5" ry="2.500" fill="#333" /><circle cx="12" cy="13" r="1" fill="#fff" /></S></TbIcon>
        <TbIcon><S w={18} h={17}><rect x="9" y="1" width="8" height="7" stroke="#555" /><path d="M2 8l5-4v3h4v3H7v3z" fill="#7fc4d6" /><rect x="2" y="9" width="9" height="7" fill="#6ab8cc" stroke="#4a98aa" /></S></TbIcon>
        <TbIcon><S w={16} h={15}><path d="M1 6l4-5h10v9l-4 4H1z" fill="#d6ecf2" stroke="#9ab" /><path d="M1 6h10v8M11 6l4-5" stroke="#9ab" /></S></TbIcon>
        <TbIcon><S w={16} h={15}><path d="M1 3l5-2h9l-2 10-5 3-5-4z" fill="#a8cfda" stroke="#8ab" /><path d="M1 3l5 3h9M6 6l2 8" stroke="#8ab" /></S></TbIcon>
        <TbIcon><S w={17} h={17}><path d="M1 0v8M13 0v8M3 3h8M7 3v6" stroke="#444" /><circle cx="2" cy="13" r="1.500" stroke="#666" /><ellipse cx="11" cy="13" rx="4.500" ry="2.500" fill="#333" /></S></TbIcon>
        <TbIcon><S w={17} h={16}><rect x="1" y="1" width="10" height="6" fill="#f6f2d8" stroke="#999" /><path d="M13 3h3M15 3v6" stroke="#444" /><ellipse cx="10" cy="13" rx="5" ry="2.500" fill="#333" /></S></TbIcon>
        <TbIcon><S w={12} h={16}><circle cx="6" cy="4" r="2.500" fill="#9cb38a" /><circle cx="6" cy="12" r="2.500" fill="#9cb38a" /></S></TbIcon>
      </div>

      {/* Tooltip */}
      <div className="absolute left-[918px] top-[175px] w-[278px] h-[84px] bg-white border border-[#d5dde5] pl-[14px] text-[12px] text-[#404040]">
        <div className="h-[22px] mt-[9px] flex items-center">
          <S w={16} h={6}><path d="M0 3h5M11 3h5" stroke="#333" /><circle cx="8" cy="3" r="2" fill="#fff" stroke="#888" /></S>
          <span className="ml-[7px] font-bold text-[#333]">重合</span>
        </div>
        <div className="mt-[4px] leading-[18px]">在同一位置上放置点、在图元上放置点或创建<br />共线约束。</div>
      </div>

      {/* Mouse highlight */}
      <div className="absolute left-[933px] top-[88px] w-[59px] h-[60px] rounded-full bg-[#eaee00] mix-blend-multiply" />
      <svg className="absolute left-[962px] top-[116px]" width="30" height="30" viewBox="0 0 30 30">
        <path d="M2 3l8 1-6 6z" fill="#111" />
        <path d="M8 5l19 17-5 6L4 10z" fill="#fff" stroke="#111" strokeWidth="1.300" />
        <path d="M21 18l-5 6M7 8l17 16" stroke="#111" strokeWidth="0.800" />
      </svg>

      {/* Banner */}
      <div className="absolute left-0 top-[523px] w-[258px] h-[159px] bg-white text-[#151515] overflow-hidden">
        <div className="h-[54px] flex items-center">
          <svg width="53" height="42" viewBox="0 0 53 42" className="shrink-0 mt-[2px]">
            <path d="M0 8L5 7L9 38L4 36z" fill="#157fb8" />
            <path d="M5 7L14 6L16 37L9 38z" fill="#2da8e0" />
            <path d="M14 17L24 16L24 23L15 24z" fill="#1f90c9" />
            <path d="M22 5L26 5L28 37L24 38z" fill="#157fb8" />
            <path d="M26 5L33 4L33 36L28 37z" fill="#2da8e0" />
            <path d="M24 6L50 0L52 3L52 9L43 11L43 34L35 36L34 12L25 14z" fill="#c8102e" />
            <path d="M34 12L38 11L38 35L35 36z" fill="#8c0a20" />
          </svg>
          <span className="ml-[25px] text-[22px] font-medium scale-y-[1.4] whitespace-nowrap"><span className="tracking-[11px]">鸿图学</span>院</span>
        </div>
        <div className="h-[38px] flex items-center pl-[1px] whitespace-nowrap scale-y-[1.3]">
          <span className="text-[15px] font-medium tracking-[7px]">专</span>
          <span className="text-[15px] font-medium">业</span>
          <span className="text-[18px] ml-[3px] font-['Roboto',sans-serif]">Creo/proe</span>
          <span className="text-[15px] font-medium tracking-[7px] ml-[2px]">产品设计教</span>
          <span className="text-[15px] font-medium">学</span>
        </div>
        <div className="h-[34px] flex items-center pl-[61px] whitespace-nowrap scale-y-[1.3]">
          <span className="text-[15px] font-medium tracking-[7px]">名师指</span>
          <span className="text-[15px] font-medium">导</span>
          <span className="text-[16px] ml-[1px] font-['Roboto',sans-serif]">QQ</span>
          <span className="text-[15px] font-medium ml-[3px]">群</span>
        </div>
        <div className="mt-[11px] pr-[10px] h-[20px] text-center text-[19px] leading-[20px] font-['Roboto',sans-serif] scale-y-[1.15]">568722486</div>
      </div>
    </div>
  );
}
